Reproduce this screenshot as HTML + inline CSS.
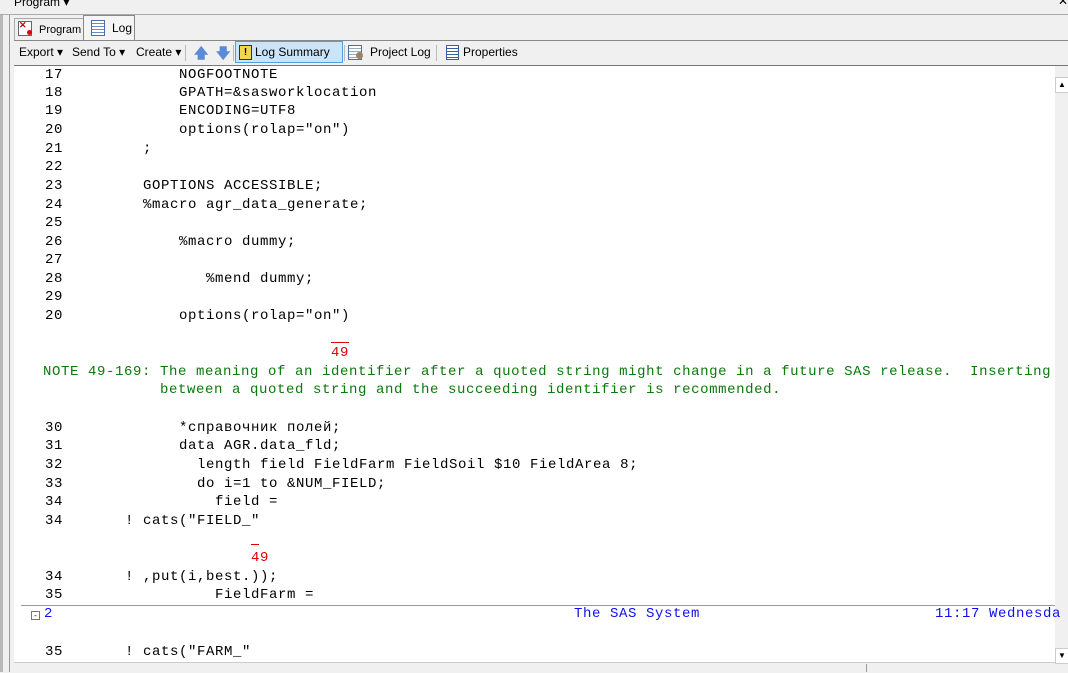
<!DOCTYPE html>
<html><head><meta charset="utf-8"><style>
body{margin:0;width:1068px;height:672px;overflow:hidden;background:#f0f0f0;font-family:"Liberation Sans",sans-serif;position:relative}
.a{position:absolute}
.m{position:absolute;font-family:"Liberation Mono","Noto Sans CJK SC",monospace;font-size:14px;letter-spacing:0.6px;line-height:18px;white-space:pre;color:#000}
.g{color:#0a7a0a}.r{color:#e00000}.b{color:#1010ee}
.ui{position:absolute;font-size:12px;line-height:14px;color:#000;white-space:nowrap}
</style></head><body>
<div class="a" style="left:0;top:0;width:1068px;height:14px;background:#f0f0f0;border-bottom:1px solid #aaa"></div>
<div class="ui" style="left:14px;top:-5px;">Program ▾</div>
<div class="a" style="left:1058px;top:-6px;font-size:12px">✕</div>
<div class="a" style="left:0;top:15px;width:3px;height:657px;background:#b8b8b8"></div>
<div class="a" style="left:9px;top:15px;width:1px;height:657px;background:#999"></div>
<!-- tabs -->
<div class="a" style="left:14px;top:18px;width:68px;height:22px;border:1px solid #aaa;border-bottom:none;background:#f0f0f0"></div>
<div class="a" style="left:18px;top:21px;width:12px;height:13px;border:1px solid #666;background:#fff"><div class="a" style="left:0;top:-2px;color:#c00;font-size:9px;font-weight:bold">✕</div><div class="a" style="left:8px;top:8px;width:5px;height:5px;border-radius:3px;background:#d00"></div></div>
<div class="ui" style="left:39px;top:23px;font-size:11px">Program</div>
<div class="a" style="left:83px;top:15px;width:50px;height:25px;border:1px solid #888;border-bottom:none;background:#f5f5f5"></div>
<div class="a" style="left:91px;top:20px;width:12px;height:14px;border:1px solid #4a6ea8;background:repeating-linear-gradient(#fff 0 2px,#6b8cc0 2px 3px)"></div>
<div class="ui" style="left:112px;top:21px">Log</div>
<div class="a" style="left:14px;top:40px;width:1054px;height:1px;background:#888"></div>
<!-- toolbar -->
<div class="ui" style="left:19px;top:45px">Export ▾</div>
<div class="ui" style="left:72px;top:45px">Send To ▾</div>
<div class="ui" style="left:136px;top:45px">Create ▾</div>
<div class="a" style="left:185px;top:45px;width:1px;height:16px;background:#bbb"></div>
<div class="a" style="left:194px;top:43px;color:#5a8ad8;font-size:14px;font-weight:bold">🡅</div>
<div class="a" style="left:216px;top:43px;color:#5a8ad8;font-size:14px;font-weight:bold">🡇</div>
<div class="a" style="left:233px;top:45px;width:1px;height:16px;background:#bbb"></div>
<div class="a" style="left:235px;top:41px;width:106px;height:20px;background:#cce4f7;border:1px solid #4fa0e0"></div>
<div class="a" style="left:239px;top:45px;width:11px;height:13px;background:#f5d64a;border:1px solid #333;font-size:10px;font-weight:bold;text-align:center;line-height:13px">!</div>
<div class="ui" style="left:255px;top:45px">Log Summary</div>
<div class="a" style="left:344px;top:45px;width:1px;height:16px;background:#bbb"></div>
<div class="a" style="left:348px;top:45px;width:12px;height:13px;border:1px solid #4a6ea8;background:repeating-linear-gradient(#fff 0 2px,#9ab 2px 3px)"></div>
<div class="a" style="left:356px;top:52px;width:7px;height:7px;border-radius:4px;background:#a08060"></div>
<div class="ui" style="left:370px;top:45px">Project Log</div>
<div class="a" style="left:436px;top:45px;width:1px;height:16px;background:#bbb"></div>
<div class="a" style="left:446px;top:45px;width:11px;height:13px;border:1px solid #3a5ea0;background:repeating-linear-gradient(#fff 0 2px,#3a5ea0 2px 3px)"></div>
<div class="ui" style="left:463px;top:45px">Properties</div>
<div class="a" style="left:14px;top:65px;width:1054px;height:1px;background:#777"></div>
<!-- editor -->
<div class="a" style="left:14px;top:66px;width:1041px;height:596px;background:#fff"></div>
<div class="a" style="left:1055px;top:66px;width:13px;height:606px;background:#f0f0f0"></div>
<div class="a" style="left:1055px;top:77px;width:12px;height:14px;background:#fff;border:1px solid #ccc;font-size:8px;text-align:center;line-height:14px">▲</div>
<div class="a" style="left:1055px;top:648px;width:12px;height:14px;background:#fff;border:1px solid #ccc;font-size:8px;text-align:center;line-height:14px">▼</div>
<div class="a" style="left:14px;top:662px;width:1041px;height:10px;background:#f0f0f0;border-top:1px solid #ccc"></div>
<div class="a" style="left:866px;top:664px;width:1px;height:8px;background:#999"></div>

<div class="m" style="left:45px;top:66px">17</div><div class="m" style="left:179px;top:66px">NOGFOOTNOTE</div>
<div class="m" style="left:45px;top:84px">18</div><div class="m" style="left:179px;top:84px">GPATH=&amp;sasworklocation</div>
<div class="m" style="left:45px;top:102px">19</div><div class="m" style="left:179px;top:102px">ENCODING=UTF8</div>
<div class="m" style="left:45px;top:121px">20</div><div class="m" style="left:179px;top:121px">options(rolap="on")</div>
<div class="m" style="left:45px;top:140px">21</div><div class="m" style="left:143px;top:140px">;</div>
<div class="m" style="left:45px;top:158px">22</div>
<div class="m" style="left:45px;top:177px">23</div><div class="m" style="left:143px;top:177px">GOPTIONS ACCESSIBLE;</div>
<div class="m" style="left:45px;top:196px">24</div><div class="m" style="left:143px;top:196px">%macro agr_data_generate;</div>
<div class="m" style="left:45px;top:214px">25</div>
<div class="m" style="left:45px;top:233px">26</div><div class="m" style="left:179px;top:233px">%macro dummy;</div>
<div class="m" style="left:45px;top:251px">27</div>
<div class="m" style="left:45px;top:270px">28</div><div class="m" style="left:206px;top:270px">%mend dummy;</div>
<div class="m" style="left:45px;top:288px">29</div>
<div class="m" style="left:45px;top:307px">20</div><div class="m" style="left:179px;top:307px">options(rolap="on")</div>
<div class="a" style="left:331px;top:342px;width:18px;height:1px;background:#e00000"></div>
<div class="m r" style="left:331px;top:344px">49</div>
<div class="m g" style="left:43px;top:363px">NOTE 49-169: The meaning of an identifier after a quoted string might change in a future SAS release.  Inserting</div>
<div class="m g" style="left:160px;top:381px">between a quoted string and the succeeding identifier is recommended.</div>
<div class="m" style="left:45px;top:419px">30</div><div class="m" style="left:179px;top:419px">*справочник полей;</div>
<div class="m" style="left:45px;top:437px">31</div><div class="m" style="left:179px;top:437px">data AGR.data_fld;</div>
<div class="m" style="left:45px;top:456px">32</div><div class="m" style="left:197px;top:456px">length field FieldFarm FieldSoil $10 FieldArea 8;</div>
<div class="m" style="left:45px;top:475px">33</div><div class="m" style="left:197px;top:475px">do i=1 to &amp;NUM_FIELD;</div>
<div class="m" style="left:45px;top:493px">34</div><div class="m" style="left:215px;top:493px">field =</div>
<div class="m" style="left:45px;top:512px">34</div><div class="m" style="left:125px;top:512px">! cats("FIELD_"</div>
<div class="a" style="left:251px;top:544px;width:8px;height:1px;background:#e00000"></div>
<div class="m r" style="left:251px;top:549px">49</div>
<div class="m" style="left:45px;top:568px">34</div><div class="m" style="left:125px;top:568px">! ,put(i,best.));</div>
<div class="m" style="left:45px;top:586px">35</div><div class="m" style="left:215px;top:586px">FieldFarm =</div>
<div class="a" style="left:21px;top:605px;width:1034px;height:1px;background:#999"></div>
<div class="a" style="left:31px;top:611px;width:7px;height:7px;border:1px solid #777;font-size:8px;line-height:7px;text-align:center">-</div>
<div class="m b" style="left:44px;top:605px">2</div>
<div class="m b" style="left:574px;top:605px">The SAS System</div>
<div class="m b" style="left:935px;top:605px">11:17 Wednesda</div>
<div class="m" style="left:45px;top:643px">35</div><div class="m" style="left:125px;top:643px">! cats("FARM_"</div>
</body></html>
